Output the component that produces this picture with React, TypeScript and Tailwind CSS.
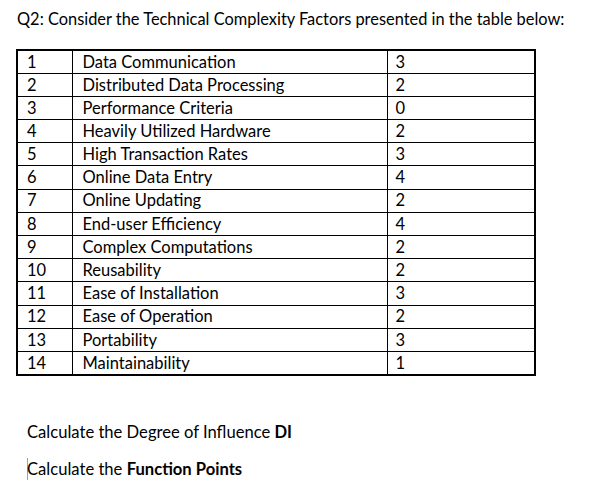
const factors: [number, string, number][] = [
  [1, "Data Communication", 3],
  [2, "Distributed Data Processing", 2],
  [3, "Performance Criteria", 0],
  [4, "Heavily Utilized Hardware", 2],
  [5, "High Transaction Rates", 3],
  [6, "Online Data Entry", 4],
  [7, "Online Updating", 2],
  [8, "End-user Efficiency", 4],
  [9, "Complex Computations", 2],
  [10, "Reusability", 2],
  [11, "Ease of Installation", 3],
  [12, "Ease of Operation", 2],
  [13, "Portability", 3],
  [14, "Maintainability", 1],
];

export default function App() {
  return (
    <div className="h-[483px] w-[599px] bg-white pl-[17px] pt-[9px] text-black" style={{ fontFamily: "Lato, 'Liberation Sans', sans-serif" }}>
      <p className="text-[16.4px] leading-[20px]">Q2: Consider the Technical Complexity Factors presented in the table below:</p>

      <table className="-ml-px mt-[20px] w-[520px] border-collapse border-2 border-black text-[16.5px]">
        <tbody>
          {factors.map(([n, name, value]) => (
            <tr key={n} className="h-[23.2px]">
              <td className="w-[55px] border border-black pl-[9px] leading-none">{n}</td>
              <td className="w-[315px] border border-black pl-[10px] leading-none">{name}</td>
              <td className="border border-black pl-[8px] leading-none">{value}</td>
            </tr>
          ))}
        </tbody>
      </table>

      <p className="mt-[46px] pl-[10px] text-[16.6px] leading-[20px]">
        Calculate the Degree of Influence <b>DI</b>
      </p>
      <p className="mt-[16px] flex items-center pl-[10px] text-[16.6px] leading-[20px]">
        <span className="-mr-px h-[22px] w-px bg-gray-400" />
        <span>
          Calculate the <b>Function Points</b>
        </span>
      </p>
    </div>
  );
}
